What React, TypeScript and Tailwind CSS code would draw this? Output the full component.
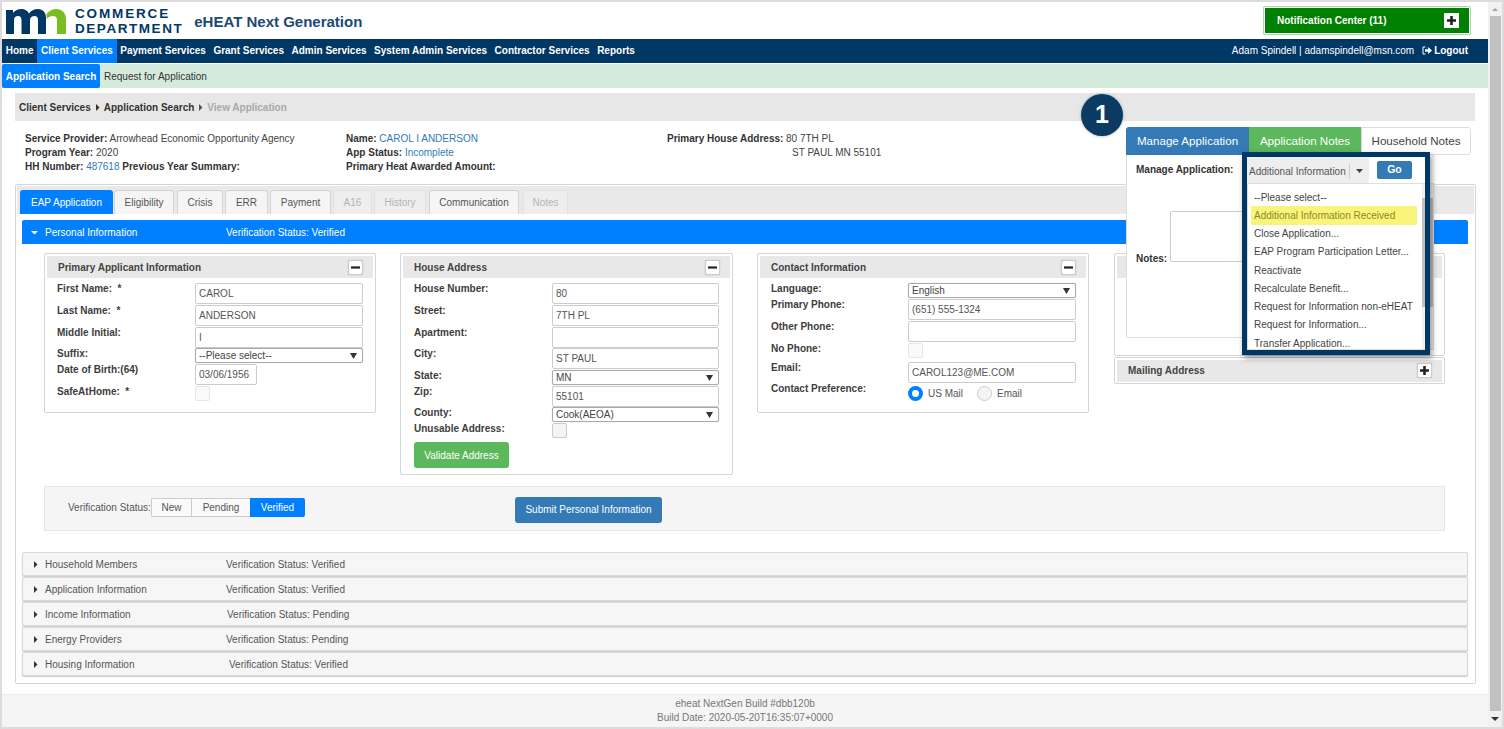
import React from "react";

const Plus = () => (
  <svg width="9" height="9" viewBox="0 0 9 9"><path d="M3.2 0h2.6v3.2H9v2.6H5.8V9H3.2V5.8H0V3.2h3.2z" fill="#222" /></svg>
);
const Minus = () => (
  <svg width="9" height="9" viewBox="0 0 9 9"><rect x="0" y="3.4" width="9" height="2.2" fill="#222" /></svg>
);
const IconBox = ({ children }: { children: React.ReactNode }) => (
  <span className="flex h-[15px] w-[15px] items-center justify-center rounded-[2px] border border-[#ccc] bg-white shadow-[0_0_1px_#999]">{children}</span>
);
const Arrow = ({ down, color = "#333" }: { down?: boolean; color?: string }) => (
  <svg width="7" height="7" viewBox="0 0 7 7" className="shrink-0">
    {down ? <path d="M0 2h7L3.5 5.5z" fill={color} /> : <path d="M2 0l3.5 3.5L2 7z" fill={color} />}
  </svg>
);

const Row = ({ h, label, children, labelLeft = 0 }: { h: number; label: React.ReactNode; children?: React.ReactNode; labelLeft?: number }) => (
  <div className="flex" style={{ height: h }}>
    <div className="w-[138px] shrink-0 whitespace-pre text-[10px] font-bold leading-[12px] text-[#3d3d3d]" style={{ paddingLeft: labelLeft }}>{label}</div>
    <div className="min-w-0 flex-1">{children}</div>
  </div>
);
const Input = ({ v = "", w }: { v?: string; w?: string }) => (
  <div className={`flex h-[21px] items-center rounded-[2px] border border-[#ccc] bg-white px-[3px] text-[10px] text-[#555] ${w ?? "w-full"}`}>{v}</div>
);
const Select = ({ v }: { v: string }) => (
  <div className="flex h-[15px] w-full items-center justify-between rounded-[2px] border border-[#aaa] bg-white pl-[3px] pr-[5px] text-[10px] leading-none text-[#444] shadow-[0_0_1px_#bbb]">
    <span>{v}</span>
    <svg width="7" height="6" viewBox="0 0 7 6"><path d="M0 0h7L3.5 6z" fill="#333" /></svg>
  </div>
);
const Check = ({ dim }: { dim?: boolean }) => (
  <div className={`h-[15px] w-[15px] rounded-[2px] border ${dim ? "border-[#e6e6e6] bg-[#fafafa]" : "border-[#ccc] bg-[#f4f4f4]"}`} />
);
const PanelHead = ({ t, plus }: { t: string; plus?: boolean }) => (
  <div className="flex h-[22px] items-center justify-between bg-[#e8e8e8] px-[11px] pr-[10px] text-[10px] font-bold text-[#444]">
    <span>{t}</span>
    <IconBox>{plus ? <Plus /> : <Minus />}</IconBox>
  </div>
);

const Tab = ({ t, w, ml, dim }: { t: string; w: number; ml: number; dim?: boolean }) => (
  <div style={{ width: w, marginLeft: ml }} className={`flex h-[24px] items-center justify-center rounded-t-[3px] border border-b-0 text-[10px] ${dim ? "border-[#e2e2e2] bg-[#eee] text-[#b5b5b5]" : "border-[#d4d4d4] bg-[#f5f5f5] text-[#555]"}`}>{t}</div>
);

const Acc = ({ t, s, left = 226 }: { t: string; s: string; left?: number }) => (
  <div className="flex h-[24px] items-center rounded-[2px] border border-[#d9d9d9] bg-[#f6f6f6] text-[10px] text-[#555] shadow-[0_1px_1px_#ccc]">
    <span className="ml-[9px] mr-[6px] flex"><Arrow /></span>
    <span style={{ width: left - 45 }} className="shrink-0">{t}</span>
    <span>{s}</span>
  </div>
);

const NavItem = ({ t, active }: { t: string; active?: boolean }) => (
  <div className={`flex h-full items-center px-[3.75px] pb-[1px] text-[10px] font-bold text-white ${active ? "bg-[#007fff]" : ""}`}>{t}</div>
);

export default function App() {
  const items = ["--Please select--", "Additional Information Received", "Close Application...", "EAP Program Participation Letter...", "Reactivate", "Recalculate Benefit...", "Request for Information non-eHEAT", "Request for Information...", "Transfer Application..."];
  return (
    <div className="relative h-[729px] w-[1504px] overflow-hidden border-b-2 border-l-2 border-r-2 border-t-2 border-[#dcdcdc] bg-white font-['Liberation_Sans',Arial,sans-serif]">
      <div className="flex h-full">
        <div className="flex h-full w-[1486px] shrink-0 flex-col">
          {/* Header */}
          <div className="flex h-[37px] shrink-0 items-center justify-between">
            <div className="flex items-center">
              <svg width="60" height="25" viewBox="0 0 60 25" className="ml-[4px] mt-[2px]">
                <path d="M0 25V1h7v3C9 1.5 12 0 15.5 0c3.5 0 6 1.5 7.5 4.5C25 1.5 28 0 32 0c5 0 8 3.5 8 9v16h-8V11c0-2.500-1.200-4-3.500-4S24 8.500 24 11v14h-8.500V11c0-2.500-1.200-4-3.500-4s-4 1.500-4 4v14z" fill="#003865" />
                <path d="M40.500 5C43 2 46 0 50 0c6 0 10 4 10 10v15h-9V11c0-2.500-1.500-4-4-4-2.500 0-4.500 1-6.500 3z" fill="#78be20" />
              </svg>
              <div className="ml-[9px] flex flex-col text-[#003865]">
                <span className="text-[13.5px] font-bold leading-[15px] tracking-[1.85px]">COMMERCE</span>
                <span className="text-[13.5px] font-bold leading-[15px] tracking-[1.55px]">DEPARTMENT</span>
              </div>
              <span className="ml-[11px] mt-[4px] text-[15px] font-bold text-[#1b4a74]">eHEAT Next Generation</span>
            </div>
            <div className="mr-[17px] flex h-[29px] w-[208px] items-center justify-between rounded-[2px] border-2 border-[#a9d8a9] bg-[#008000] pl-[12px] pr-[10px] text-[10px] font-bold text-white outline outline-1 -outline-offset-2 outline-white">
              <span>Notification Center (11)</span>
              <span className="flex h-[15px] w-[15px] items-center justify-center bg-white"><Plus /></span>
            </div>
          </div>
          {/* Nav */}
          <div className="flex h-[24px] shrink-0 items-center justify-between bg-[#003865] pr-[20px]">
            <div className="flex h-full">
              <NavItem t="Home" />
              <NavItem t="Client Services" active />
              <NavItem t="Payment Services" />
              <NavItem t="Grant Services" />
              <NavItem t="Admin Services" />
              <NavItem t="System Admin Services" />
              <NavItem t="Contractor Services" />
              <NavItem t="Reports" />
            </div>
            <div className="flex items-center pb-[1px] text-[10px] text-white">
              <span>Adam Spindell | adamspindell@msn.com</span>
              <span className="ml-[8px] flex items-center gap-[2px] font-bold">
                <svg width="10" height="9" viewBox="0 0 10 9"><path d="M3.5 1H1v7h2.5" fill="none" stroke="#fff" strokeWidth="1" /><path d="M3 3.2h3V1l4 3.500L6 8V5.800H3z" fill="#fff" /></svg>
                Logout
              </span>
            </div>
          </div>
          {/* Sub nav */}
          <div className="mt-[1px] flex h-[24px] shrink-0 items-center bg-[#d4ebdc] text-[10px] text-[#333]">
            <div className="flex h-full w-[98px] items-center justify-center rounded-[2px] bg-[#007fff] text-[10px] font-bold text-white">Application Search</div>
            <span className="ml-[4px]">Request for Application</span>
          </div>
          {/* Breadcrumb */}
          <div className="ml-[13px] mt-[5px] flex h-[28px] w-[1460px] shrink-0 items-center gap-[3px] bg-[#e7e7e7] pl-[4px] pt-[1px] text-[10px] font-bold text-[#333]">
            <span>Client Services</span><Arrow />
            <span>Application Search</span><Arrow color="#555" />
            <span className="text-[#a9a9a9]">View Application</span>
          </div>
          {/* Summary */}
          <div className="ml-[23px] mt-[11px] flex h-[44px] shrink-0 text-[10px] leading-[14px] text-[#444]">
            <div className="w-[321px]">
              <div><b className="text-[#333]">Service Provider:</b> Arrowhead Economic Opportunity Agency</div>
              <div><b className="text-[#333]">Program Year:</b> 2020</div>
              <div><b className="text-[#333]">HH Number:</b> <span className="text-[#337ab7]">487618</span> <b className="text-[#333]">Previous Year Summary:</b></div>
            </div>
            <div className="w-[321px]">
              <div><b className="text-[#333]">Name:</b> <span className="text-[#337ab7]">CAROL I ANDERSON</span></div>
              <div><b className="text-[#333]">App Status:</b> <span className="text-[#337ab7]">Incomplete</span></div>
              <div><b className="text-[#333]">Primary Heat Awarded Amount:</b></div>
            </div>
            <div>
              <div className="flex"><b className="w-[119px] text-[#333]">Primary House Address:</b><span>80 7TH PL</span></div>
              <div className="flex"><span className="w-[125px]" /><span>ST PAUL MN 55101</span></div>
            </div>
          </div>
          {/* Tab panel */}
          <div className="ml-[13px] mt-[8px] flex h-[500px] w-[1461px] shrink-0 flex-col rounded-[2px] border border-[#d5d5d5] px-[1px] pt-[1px]">
            <div className="flex h-[28px] shrink-0 items-end bg-[#e9e9e9] pl-[3px]">
              <div className="flex h-[24px] w-[93px] items-center justify-center rounded-t-[3px] bg-[#007fff] text-[10px] text-white">EAP Application</div>
              <Tab t="Eligibility" w={60} ml={1} />
              <Tab t="Crisis" w={46} ml={3} />
              <Tab t="ERR" w={43} ml={2} />
              <Tab t="Payment" w={61} ml={2} />
              <Tab t="A16" w={39} ml={2} dim />
              <Tab t="History" w={52} ml={2} dim />
              <Tab t="Communication" w={90} ml={3} />
              <Tab t="Notes" w={45} ml={4} dim />
            </div>
            <div className="ml-[5px] mt-[6px] flex h-[24px] w-[1446px] shrink-0 items-center rounded-t-[2px] bg-[#007fff] text-[10px] text-white">
              <span className="ml-[9px] mr-[7px] flex"><Arrow down color="#fff" /></span>
              <span className="w-[181px]">Personal Information</span>
              <span>Verification Status: Verified</span>
            </div>
            {/* Panels */}
            <div className="ml-[27px] mt-[9px] flex h-[232px] shrink-0 items-start">
              <div className="h-[160px] w-[332px] shrink-0 rounded-[2px] border border-[#d5d5d5] px-[2px] pt-[2px]">
                <PanelHead t="Primary Applicant Information" />
                <div className="px-[10px] pt-[5px]">
                  <Row h={22} label="First Name:  *"><Input v="CAROL" /></Row>
                  <Row h={22} label="Last Name:  *"><Input v="ANDERSON" /></Row>
                  <Row h={21} label="Middle Initial:"><Input v="I" /></Row>
                  <Row h={16} label="Suffix:"><Select v="--Please select--" /></Row>
                  <Row h={22} label="Date of Birth:(64)"><Input v="03/06/1956" w="w-[62px]" /></Row>
                  <Row h={16} label="SafeAtHome:  *"><Check dim /></Row>
                </div>
              </div>
              <div className="ml-[24px] h-[222px] w-[333px] shrink-0 rounded-[2px] border border-[#d5d5d5] px-[2px] pt-[2px]">
                <PanelHead t="House Address" />
                <div className="pl-[11px] pr-[11px] pt-[5px]">
                  <Row h={22} label="House Number:"><Input v="80" /></Row>
                  <Row h={22} label="Street:"><Input v="7TH PL" /></Row>
                  <Row h={21} label="Apartment:"><Input /></Row>
                  <Row h={22} label="City:"><Input v="ST PAUL" /></Row>
                  <Row h={16} label="State:"><Select v="MN" /></Row>
                  <Row h={21} label="Zip:"><Input v="55101" /></Row>
                  <Row h={16} label="County:"><Select v="Cook(AEOA)" /></Row>
                  <Row h={19} label="Unusable Address:"><Check /></Row>
                </div>
                <div className="ml-[11px] flex h-[26px] w-[95px] items-center justify-center rounded-[3px] bg-[#5cb85c] text-[10px] text-white">Validate Address</div>
              </div>
              <div className="ml-[24px] h-[160px] w-[332px] shrink-0 rounded-[2px] border border-[#d5d5d5] px-[2px] pt-[2px]">
                <PanelHead t="Contact Information" />
                <div className="px-[10px] pt-[5px]">
                  <Row h={16} labelLeft={1} label="Language:"><Select v="English" /></Row>
                  <Row h={22} labelLeft={1} label="Primary Phone:"><Input v="(651) 555-1324" /></Row>
                  <Row h={22} labelLeft={1} label="Other Phone:"><Input /></Row>
                  <Row h={19} labelLeft={1} label="No Phone:"><Check dim /></Row>
                  <Row h={21} labelLeft={1} label="Email:"><Input v="CAROL123@ME.COM" /></Row>
                  <Row h={20} labelLeft={1} label="Contact Preference:">
                    <div className="flex h-[20px] items-center text-[10px] text-[#555]">
                      <span className="flex h-[15px] w-[15px] items-center justify-center rounded-full bg-[#007fff]"><span className="h-[7px] w-[7px] rounded-full bg-white" /></span>
                      <span className="ml-[5px]">US Mail</span>
                      <span className="ml-[14px] h-[15px] w-[15px] rounded-full border border-[#ccc] bg-[#f4f4f4]" />
                      <span className="ml-[5px]">Email</span>
                    </div>
                  </Row>
                </div>
              </div>
              <div className="ml-[25px] flex w-[331px] shrink-0 flex-col gap-[1px]">
                <div className="h-[103px] rounded-[2px] border border-[#d5d5d5] px-[2px] pt-[2px]"><PanelHead t="" /></div>
                <div className="flex h-[27px] items-center rounded-[2px] border border-[#d5d5d5] px-[2px]">
                  <div className="w-full"><PanelHead t="Mailing Address" plus /></div>
                </div>
              </div>
            </div>
            {/* Verification bar */}
            <div className="ml-[27px] mt-[1px] flex h-[45px] w-[1401px] shrink-0 items-start border border-[#e5e5e5] bg-[#f5f5f5] pl-[23px] pt-[11px] text-[10px] text-[#555]">
              <span className="mt-[2px] w-[83px]">Verification Status:</span>
              <div className="flex h-[19px] overflow-hidden rounded-l-[2px] border border-r-0 border-[#ccc]">
                <div className="flex w-[40px] items-center justify-center border-r border-[#ccc] bg-[#fafafa] pb-[1px]">New</div>
                <div className="flex w-[58px] items-center justify-center bg-[#fafafa] pb-[1px]">Pending</div>
              </div>
              <div className="flex h-[19px] w-[55px] items-center justify-center rounded-r-[2px] bg-[#007fff] pb-[1px] text-white">Verified</div>
              <div className="-mt-[1px] ml-[210px] flex h-[26px] w-[147px] items-center justify-center rounded-[3px] bg-[#337ab7] pb-[1px] text-white">Submit Personal Information</div>
            </div>
            {/* Accordions */}
            <div className="ml-[5px] mt-[21px] flex w-[1446px] flex-col gap-[1px]">
              <Acc t="Household Members" s="Verification Status: Verified" />
              <Acc t="Application Information" s="Verification Status: Verified" />
              <Acc t="Income Information" s="Verification Status: Pending" left={227} />
              <Acc t="Energy Providers" s="Verification Status: Pending" />
              <Acc t="Housing Information" s="Verification Status: Verified" left={229} />
            </div>
          </div>
          {/* Footer */}
          <div className="mt-[10px] flex min-h-0 flex-1 flex-col items-center justify-center border-t border-[#eee] bg-[#f5f5f5] text-[10px] leading-[14px] text-[#777]">
            <div>eheat NextGen Build #dbb120b</div>
            <div>Build Date: 2020-05-20T16:35:07+0000</div>
          </div>
        </div>
        {/* Page scrollbar */}
        <div className="flex h-full w-[14px] shrink-0 flex-col items-center bg-[#f1f1f1]">
          <svg width="8" height="14" viewBox="0 0 8 14"><path d="M1 9l3-3 3 3z" fill="#a3a3a3" /></svg>
          <div className="h-[695px] w-[11px] bg-[#c1c1c1]" />
          <svg width="8" height="14" viewBox="0 0 8 14" className="mt-[1px]"><path d="M0 5h8L4 9z" fill="#333" /></svg>
        </div>
      </div>

      {/* Step badge */}
      <div className="absolute left-[1079px] top-[92px] flex h-[42px] w-[42px] items-center justify-center rounded-full bg-[#0b3a63] text-[25px] font-bold text-white shadow-[0_0_3px_#9ab]">1</div>

      {/* Manage application overlay */}
      <div className="absolute left-[1124px] top-[125px] w-[345px]">
        <div className="flex h-[28px] text-[11.6px]">
          <div className="flex w-[123px] items-center justify-center rounded-tl-[3px] bg-[#337ab7] text-white">Manage Application</div>
          <div className="flex w-[112px] items-center justify-center bg-[#5cb85c] text-white">Application Notes</div>
          <div className="flex w-[110px] items-center justify-center rounded-r-[3px] border border-[#ddd] bg-white text-[#444]">Household Notes</div>
        </div>
        <div className="relative h-[183px] w-[308px] rounded-b-[2px] border border-t-0 border-[#ddd] bg-white text-[10px] font-bold text-[#333]">
          <span className="absolute left-[9px] top-[7px]">Manage Application:</span>
          <span className="absolute left-[9px] top-[96px]">Notes:</span>
          <div className="absolute left-[43px] top-[56px] h-[51px] w-[80px] rounded-l-[2px] border border-[#ccc] bg-white" />
        </div>
      </div>
      <div className="absolute left-[1245px] top-[155px] h-[193px] w-[187px]">
        <div className="flex h-[26px] items-start bg-white">
          <div className="flex h-[26px] w-[122px] items-center overflow-hidden rounded-[2px] bg-[#eee] pl-[2px] pt-[2px] text-[10px] text-[#555]">
            <span className="w-[101px] shrink-0 overflow-hidden whitespace-nowrap border-r border-[#ccc]">Additional Information Received</span>
            <svg width="7" height="4" viewBox="0 0 7 4" className="ml-[6px]"><path d="M0 0h7L3.5 4z" fill="#444" /></svg>
          </div>
          <div className="ml-[8px] mt-[4px] flex h-[18px] w-[35px] items-center justify-center rounded-[2px] bg-[#337ab7] pb-[1px] text-[10.5px] font-bold text-white">Go</div>
        </div>
        <div className="relative h-[167px] overflow-hidden border border-[#ddd] bg-white pl-[6px] pt-[4px] text-[10px] text-[#444]">
          {items.map((t, i) => (
            <div key={t} className={`flex h-[18.25px] items-center ${i === 1 ? "-ml-[3px] w-[166px] rounded-[1px] bg-[#fbf47a] pl-[3px] text-[#8a8a2a]" : ""}`}>{t}</div>
          ))}
          <div className="absolute bottom-0 right-0 top-0 w-[11px] bg-[#f1f1f1]">
            <div className="mt-[14px] h-[109px] w-full bg-[#c1c1c1]" />
          </div>
        </div>
      </div>
      {/* Highlight frame */}
      <div className="pointer-events-none absolute left-[1240px] top-[150px] h-[203px] w-[188px] border-[5px] border-[#003865] shadow-[2px_3px_6px_rgba(0,0,0,0.4)]" />
    </div>
  );
}
